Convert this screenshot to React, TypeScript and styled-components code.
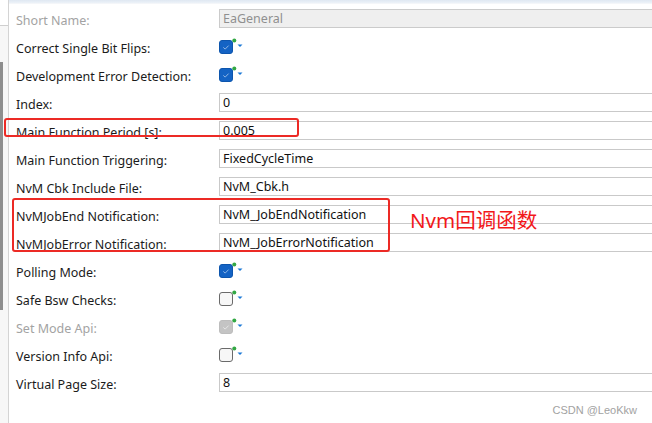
import React from 'react';
import styled, { createGlobalStyle } from 'styled-components';

const GlobalStyle = createGlobalStyle`
  html, body {
    margin: 0;
    padding: 0;
    background: #ffffff;
  }
  body {
    font-family: "Segoe UI", "Noto Sans", "Noto Sans CJK SC", sans-serif;
  }
`;

const Window = styled.div`
  position: relative;
  width: 652px;
  height: 423px;
  overflow: hidden;
  display: flex;
  background: #ffffff;
`;

const SideStrip = styled.div`
  width: 8px;
  flex: none;
  display: flex;
  flex-direction: column;
  border-right: 1px solid #d4d4d4;
`;

const SideHeader = styled.div`
  height: 25px;
  background: #ffffff;
  border-bottom: 1px solid #cfcfcf;
`;

const SideBody = styled.div`
  flex: 1;
  background: #f7f7f7;
  padding-top: 36px;
`;

const ScrollThumb = styled.div`
  width: 3px;
  height: 248px;
  background: #8e8e8e;
`;

const Editor = styled.div`
  flex: 1;
  display: flex;
  flex-direction: column;
`;

const TopBar = styled.div`
  height: 3px;
  background: linear-gradient(#dfe8f2, #edf2f8);
  border-bottom: 1px solid #f4f6f9;
`;

const Form = styled.div`
  display: flex;
  flex-direction: column;
  padding-left: 7px;
`;

const Row = styled.div`
  height: 28px;
  display: flex;
  align-items: center;
`;

const Label = styled.span<{ $disabled?: boolean }>`
  width: 203px;
  flex: none;
  padding-top: 5px;
  font-size: 12.5px;
  color: ${({ $disabled }) => ($disabled ? '#a3a3a3' : '#1b1b1b')};
  white-space: nowrap;
`;

const TextField = styled.div<{ $disabled?: boolean }>`
  flex: 1;
  height: 19px;
  margin-right: -20px;
  box-sizing: border-box;
  border: 1px solid ${({ $disabled }) => ($disabled ? '#cbcbcb' : '#c9c9c9')};
  background: ${({ $disabled }) => ($disabled ? '#efefef' : '#ffffff')};
  color: ${({ $disabled }) => ($disabled ? '#8f8f8f' : '#111111')};
  font-size: 12.5px;
  line-height: 17px;
  padding-left: 3px;
  white-space: nowrap;
`;

const CheckWrap = styled.div`
  display: flex;
  align-items: center;
`;

const Annotation = styled.div<{ $l: number; $t: number; $w: number; $h: number }>`
  position: absolute;
  left: ${({ $l }) => $l}px;
  top: ${({ $t }) => $t}px;
  width: ${({ $w }) => $w}px;
  height: ${({ $h }) => $h}px;
  box-sizing: border-box;
  border: 2px solid #ec2a25;
  border-radius: 3px;
  pointer-events: none;
`;

const Note = styled.div`
  position: absolute;
  left: 410px;
  top: 206px;
  font-family: "Noto Sans", "Noto Sans CJK SC", sans-serif;
  font-size: 20.5px;
  line-height: 28px;
  color: #f2181a;
  white-space: nowrap;
`;

const Watermark = styled.div`
  position: absolute;
  right: 15px;
  bottom: 7px;
  font-family: "Liberation Sans", "Noto Sans", sans-serif;
  font-size: 11px;
  color: #a2a2a2;
`;

type CheckProps = { checked: boolean; disabled?: boolean };

const CheckIcon = ({ checked, disabled }: CheckProps) => {
  const fill = disabled ? '#c4c4c4' : checked ? '#1463c4' : '#f7f7f7';
  const stroke = disabled ? '#bdbdbd' : checked ? '#0d55ad' : '#6a6a6a';
  return (
    <svg width="26" height="16" viewBox="0 0 26 16">
      <rect x="0.5" y="2.5" width="13" height="13" rx="2.5" fill={fill} stroke={stroke} />
      {checked && (
        <path d="M4.3 9.4 L6.2 11.1 L9.6 7.6" fill="none" stroke={disabled ? '#e6e6e6' : '#8fb6e6'} strokeWidth="1" />
      )}
      <circle cx="15.3" cy="2.6" r="2" fill="#33a844" />
      <path d="M18.5 6.6 L23.5 6.6 L21 9 Z" fill="#1a78d6" />
    </svg>
  );
};

type Field =
  | { label: string; kind: 'text'; value: string; disabled?: boolean }
  | { label: string; kind: 'check'; checked: boolean; disabled?: boolean };

const fields: Field[] = [
  { label: 'Short Name:', kind: 'text', value: 'EaGeneral', disabled: true },
  { label: 'Correct Single Bit Flips:', kind: 'check', checked: true },
  { label: 'Development Error Detection:', kind: 'check', checked: true },
  { label: 'Index:', kind: 'text', value: '0' },
  { label: 'Main Function Period [s]:', kind: 'text', value: '0.005' },
  { label: 'Main Function Triggering:', kind: 'text', value: 'FixedCycleTime' },
  { label: 'NvM Cbk Include File:', kind: 'text', value: 'NvM_Cbk.h' },
  { label: 'NvMJobEnd Notification:', kind: 'text', value: 'NvM_JobEndNotification' },
  { label: 'NvMJobError Notification:', kind: 'text', value: 'NvM_JobErrorNotification' },
  { label: 'Polling Mode:', kind: 'check', checked: true },
  { label: 'Safe Bsw Checks:', kind: 'check', checked: false },
  { label: 'Set Mode Api:', kind: 'check', checked: true, disabled: true },
  { label: 'Version Info Api:', kind: 'check', checked: false },
  { label: 'Virtual Page Size:', kind: 'text', value: '8' },
];

const App = () => (
  <>
    <GlobalStyle />
    <Window>
      <SideStrip>
        <SideHeader />
        <SideBody>
          <ScrollThumb />
        </SideBody>
      </SideStrip>
      <Editor>
        <TopBar />
        <Form>
          {fields.map((f) => (
            <Row key={f.label}>
              <Label $disabled={f.disabled}>{f.label}</Label>
              {f.kind === 'text' ? (
                <TextField $disabled={f.disabled}>{f.value}</TextField>
              ) : (
                <CheckWrap>
                  <CheckIcon checked={f.checked} disabled={f.disabled} />
                </CheckWrap>
              )}
            </Row>
          ))}
        </Form>
      </Editor>
      <Annotation $l={4} $t={118} $w={295} $h={19} />
      <Annotation $l={12} $t={198} $w={378} $h={54} />
      <Note>Nvm回调函数</Note>
      <Watermark>CSDN @LeoKkw</Watermark>
    </Window>
  </>
);

export default App;
